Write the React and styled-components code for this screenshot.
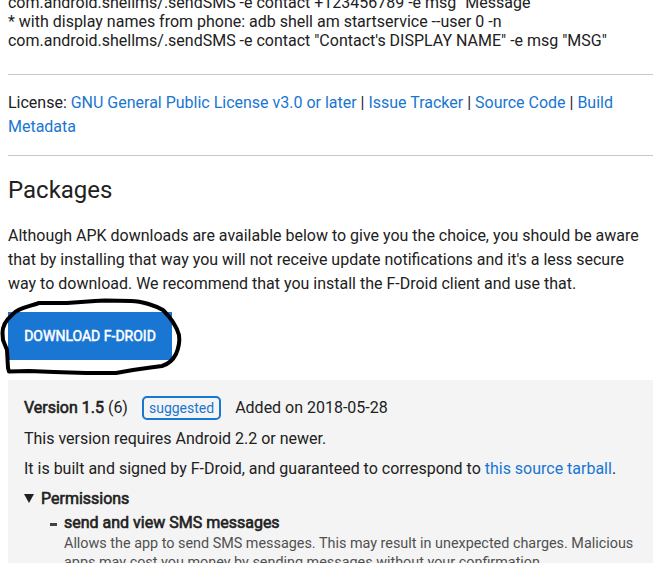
import React from "react";
import styled, { createGlobalStyle } from "styled-components";

const GlobalStyle = createGlobalStyle`
	body {
		margin: 0;
		background: #fff;
		overflow: hidden;
	}
`;

const Page = styled.div`
	height: 563px;
	padding: 0 16px 0 8px;
	box-sizing: border-box;
	overflow: hidden;
	color: #212121;
	font: 400 15.99px/24px Roboto, sans-serif;
`;

const Description = styled.div`
	margin-top: -7px;
	line-height: 19px;
	white-space: nowrap;
`;

const Line = styled.div``;

const Rule = styled.hr`
	height: 1px;
	margin: ${(props) => props.$margin};
	border: none;
	background: #c8c8c8;
`;

const Link = styled.a`
	color: #1976d2;
	text-decoration: none;
`;

const Paragraph = styled.p`
	margin: 0;
`;

const Title = styled.h3`
	margin: 18px 0 18px;
	font-size: 24px;
	font-weight: 400;
	line-height: 32px;
`;

const ButtonWrapper = styled.div`
	position: relative;
	display: flex;
	margin-top: 16px;
`;

const Button = styled.a`
	width: 164px;
	height: 48px;
	background: #1976d2;
	color: #fff;
	font-size: 14px;
	-webkit-text-stroke: 0.5px;
	line-height: 48px;
	text-align: center;
`;

const Circle = styled.svg`
	position: absolute;
	left: -8px;
	top: -17px;
	overflow: visible;
`;

const Package = styled.section`
	margin-top: 20px;
	padding: 15px 16px 0;
	background: #f4f4f4;
`;

const VersionRow = styled.div`
	display: flex;
	align-items: center;
	height: 25px;
	margin-bottom: 7px;
	white-space: pre;
`;

const Badge = styled.span`
	margin: 0 14px;
	padding: 0 5px;
	border: 2px solid #1976d2;
	border-radius: 5px;
	color: #1976d2;
	font-size: 14px;
	line-height: 20px;
`;

const Detail = styled.div`
	margin-bottom: 6px;
	white-space: nowrap;
`;

const Summary = styled.div`
	display: flex;
	align-items: center;
	gap: 7px;
`;

const Permission = styled.div`
	display: flex;
	margin-left: 26px;
	gap: 7px;
`;

const Dash = styled.span`
	width: 7px;
	height: 3px;
	margin-top: 12px;
	background: #424242;
`;

const PermissionText = styled.div`
	color: #505050;
	font-size: 14.38px;
	line-height: 19px;
	white-space: nowrap;
`;

const PermissionName = styled.div`
	color: #212121;
	font-size: 16px;
	-webkit-text-stroke: 0.6px;
	line-height: 24px;
	margin-bottom: -1px;
`;

const Strong = styled.b`
	font-weight: 400;
	-webkit-text-stroke: 0.6px;
`;

export default function App() {
	return (
		<Page>
			<GlobalStyle />
			<Description>
				<Line>com.android.shellms/.sendSMS -e contact +123456789 -e msg "Message"</Line>
				<Line>* with display names from phone: adb shell am startservice --user 0 -n</Line>
				<Line>com.android.shellms/.sendSMS -e contact "Contact's DISPLAY NAME" -e msg "MSG"</Line>
			</Description>
			<Rule $margin="24px 0 16px" />
			<Paragraph>
				License: <Link>GNU General Public License v3.0 or later</Link> | <Link>Issue Tracker</Link> | <Link>Source Code</Link> | <Link>Build Metadata</Link>
			</Paragraph>
			<Rule $margin="16px 0 0" />
			<Title>Packages</Title>
			<Paragraph>
				Although APK downloads are available below to give you the choice, you should be aware that by installing that way you will not receive update notifications and it's a less secure way to download. We recommend that you install the F-Droid client and use that.
			</Paragraph>
			<ButtonWrapper>
				<Button>DOWNLOAD F-DROID</Button>
				<Circle width="184" height="78" viewBox="0 295 184 78" fill="none">
					<path d="M9 371.5L8 368L7 350L3 340L2.5 333C2.5 326 6 320 12 315C17 309 24 308 39 303L67 303L95 301L105 300.5L131 301C142 301 156 306 163 310C172 319 177 328 179 335C180 342 179 347 176 354C173 360 169 364 162 366L147 368L133 370L116 373L86 373L54 372L29 371L9 371.5" stroke="#000" strokeWidth="4" strokeLinecap="round" strokeLinejoin="round" />
				</Circle>
			</ButtonWrapper>
			<Package>
				<VersionRow><span><Strong>Version 1.5</Strong> (6)</span><Badge>suggested</Badge><span>Added on 2018-05-28</span></VersionRow>
				<Detail>This version requires Android 2.2 or newer.</Detail>
				<Detail>It is built and signed by F-Droid, and guaranteed to correspond to <Link>this source tarball</Link>.</Detail>
				<Summary>
					<svg width="10" height="10" viewBox="0 0 10 10"><path d="M0 0h10L5 9z" fill="#212121" /></svg>
					<Strong>Permissions</Strong>
				</Summary>
				<Permission>
					<Dash />
					<PermissionText>
						<PermissionName>send and view SMS messages</PermissionName>
						<Line>Allows the app to send SMS messages. This may result in unexpected charges. Malicious</Line>
						<Line>apps may cost you money by sending messages without your confirmation.</Line>
					</PermissionText>
				</Permission>
			</Package>
		</Page>
	);
}
